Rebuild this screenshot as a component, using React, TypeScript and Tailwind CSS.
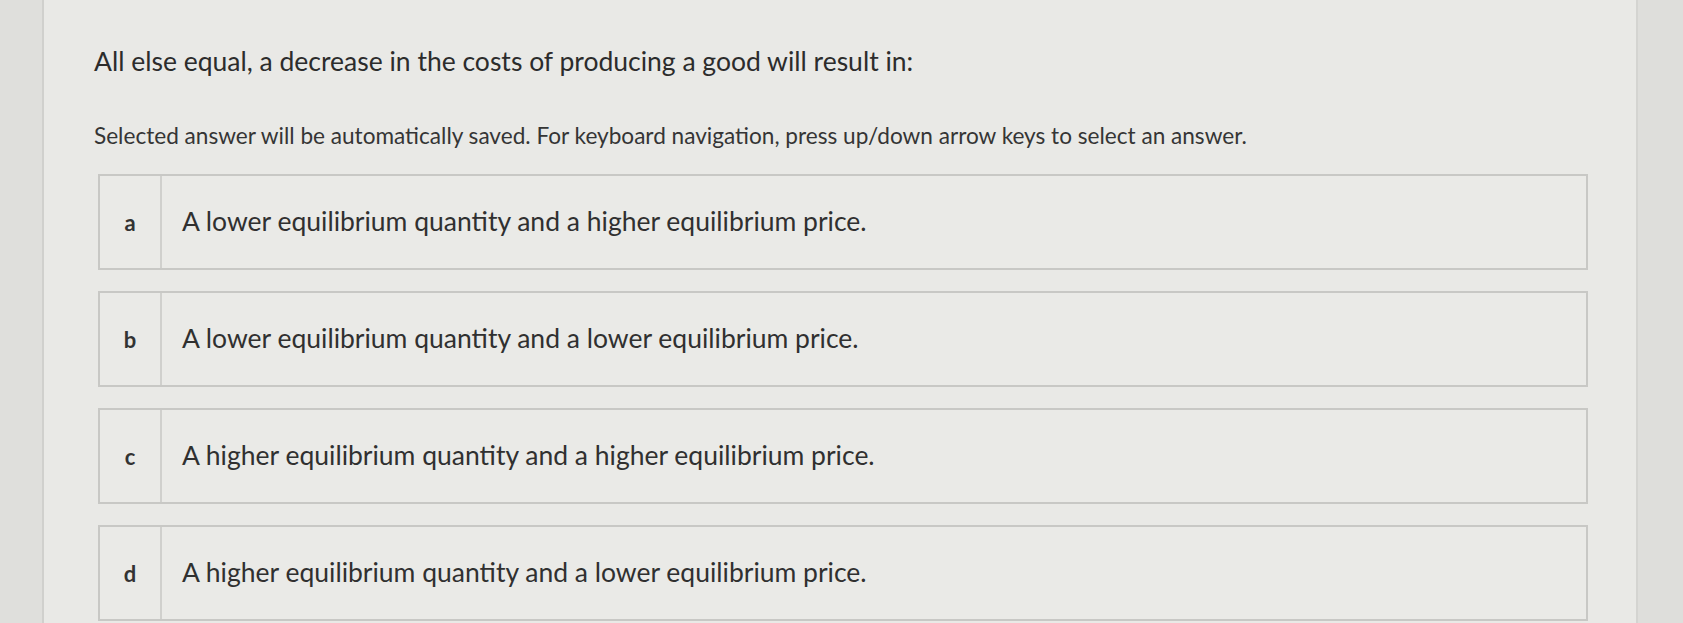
import React from "react";

const options = [
  { k: "a", t: "A lower equilibrium quantity and a higher equilibrium price." },
  { k: "b", t: "A lower equilibrium quantity and a lower equilibrium price." },
  { k: "c", t: "A higher equilibrium quantity and a higher equilibrium price." },
  { k: "d", t: "A higher equilibrium quantity and a lower equilibrium price." },
];

export default function App() {
  return (
    <div
      className="flex h-[623px] w-[1683px] overflow-hidden bg-[#dcdcd9] text-[#383838]"
      style={{ fontFamily: "Lato, 'Open Sans', sans-serif" }}
    >
      <div className="w-[44px] shrink-0 border-r-2 border-[#d0d0cd] bg-[#dfdfdc]" />
      <div className="flex w-[1592px] shrink-0 flex-col bg-[#e9e9e6] pl-[50px]">
        <h1 className="mt-[45px] text-[26.5px] leading-[32px] text-[#2c2c2c]">
          All else equal, a decrease in the costs of producing a good will result in:
        </h1>
        <p className="mt-[46px] text-[22.6px] leading-[26px] text-[#353535]">
          Selected answer will be automatically saved. For keyboard navigation, press up/down arrow keys to select an answer.
        </p>
        <div className="mt-[25px] flex w-[1500px] flex-col gap-[21px] pl-[4px]">
          {options.map((o) => (
            <div
              key={o.k}
              className="flex h-[96px] w-[1490px] items-center border-2 border-[#c8c8c5] bg-[#eaeae7]"
            >
              <div className="flex h-full w-[62px] shrink-0 items-center justify-center border-r-2 border-[#d0d0cd] text-[22px] font-bold text-[#333]">
                {o.k}
              </div>
              <div className="pl-[20px] text-[26.5px] text-[#303030]">{o.t}</div>
            </div>
          ))}
        </div>
      </div>
      <div className="flex-1 border-l-2 border-[#d4d4d1] bg-[#dededb]" />
    </div>
  );
}
